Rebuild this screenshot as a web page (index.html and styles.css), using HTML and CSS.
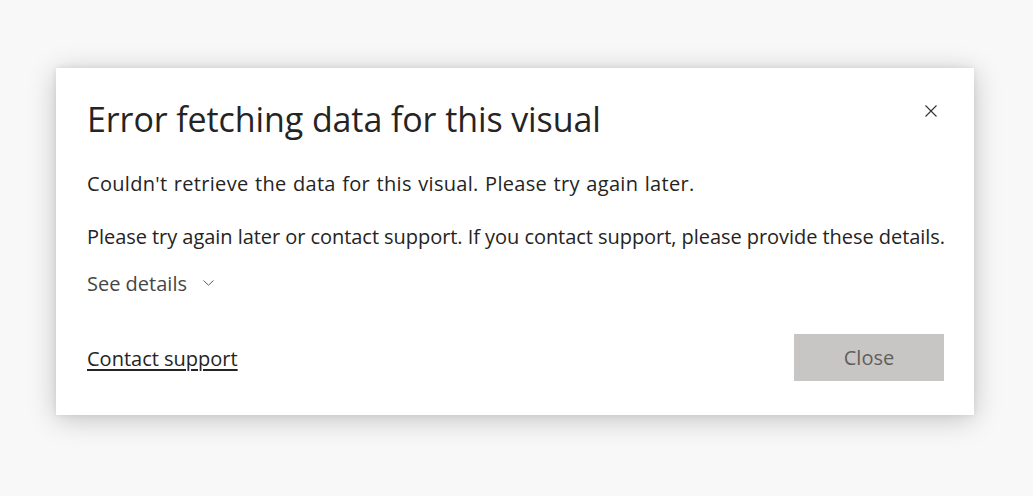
FILE: index.html
```html
<!DOCTYPE html>
<html lang="en">
<head>
<meta charset="utf-8">
<title>Error fetching data</title>
<link rel="stylesheet" href="styles.css">
</head>
<body>
<div class="dialog" role="dialog">
  <div class="header">
    <h1 class="title">Error fetching data for this visual</h1>
    <button class="close-x" aria-label="Close">
      <svg width="12" height="12" viewBox="0 0 12 12"><path d="M0.5 0.5 L11.5 11.5 M11.5 0.5 L0.5 11.5" stroke="#323130" stroke-width="1.1" fill="none"/></svg>
    </button>
  </div>
  <p class="msg first">Couldn't retrieve the data for this visual. Please try again later.</p>
  <p class="msg second">Please try again later or contact support. If you contact support, please provide these details.</p>
  <div class="details">See details
    <svg class="chev" width="11" height="6" viewBox="0 0 11 6"><path d="M0.5 0.5 L5.5 5.2 L10.5 0.5" stroke="#605e5c" stroke-width="1" fill="none"/></svg>
  </div>
  <div class="footer">
    <a class="link" href="#">Contact support</a>
    <button class="btn">Close</button>
  </div>
</div>
</body>
</html>
```
FILE: styles.css
```css
html, body {
  margin: 0;
  padding: 0;
}
body {
  background: #f8f8f8;
  width: 1033px;
  height: 496px;
  overflow: hidden;
  font-family: "Open Sans", "Noto Sans", sans-serif;
  color: #252423;
}
.dialog {
  margin: 68px 0 0 56px;
  width: 918px;
  height: 347px;
  box-sizing: border-box;
  background: #fff;
  box-shadow: 0 4px 26px rgba(0, 0, 0, 0.22), 0 0 6px rgba(0, 0, 0, 0.08);
  padding: 31px 30px 0 31px;
  display: flex;
  flex-direction: column;
}
.header {
  display: flex;
  justify-content: space-between;
  align-items: flex-start;
}
.title {
  margin: 0;
  font-size: 34px;
  font-weight: 400;
  line-height: 40px;
  letter-spacing: -0.1px;
  color: #252423;
}
.close-x {
  border: 0;
  background: transparent;
  padding: 0;
  margin: 6px 7px 0 0;
  width: 12px;
  height: 12px;
  display: flex;
}
.msg {
  margin: 0;
  font-size: 20px;
  line-height: 24px;
  white-space: nowrap;
}
.msg.first {
  margin-top: 33px;
  letter-spacing: 0.3px;
  word-spacing: 1px;
}
.msg.second {
  margin-top: 29px;
  letter-spacing: -0.05px;
}
.details {
  margin-top: 23px;
  font-size: 20px;
  line-height: 24px;
  color: #484644;
  display: flex;
  align-items: center;
  gap: 16px;
}
.chev {
  margin-top: -2px;
}
.footer {
  margin-top: 38px;
  display: flex;
  justify-content: space-between;
  align-items: center;
}
.link {
  font-size: 20px;
  color: #252423;
  text-decoration: underline;
  text-underline-offset: 3px;
  margin-top: 2px;
}
.btn {
  width: 150px;
  height: 47px;
  border: 0;
  background: #c8c6c4;
  color: #605e5c;
  font-family: "Open Sans", "Noto Sans", sans-serif;
  font-size: 20px;
  padding: 0;
}
```
